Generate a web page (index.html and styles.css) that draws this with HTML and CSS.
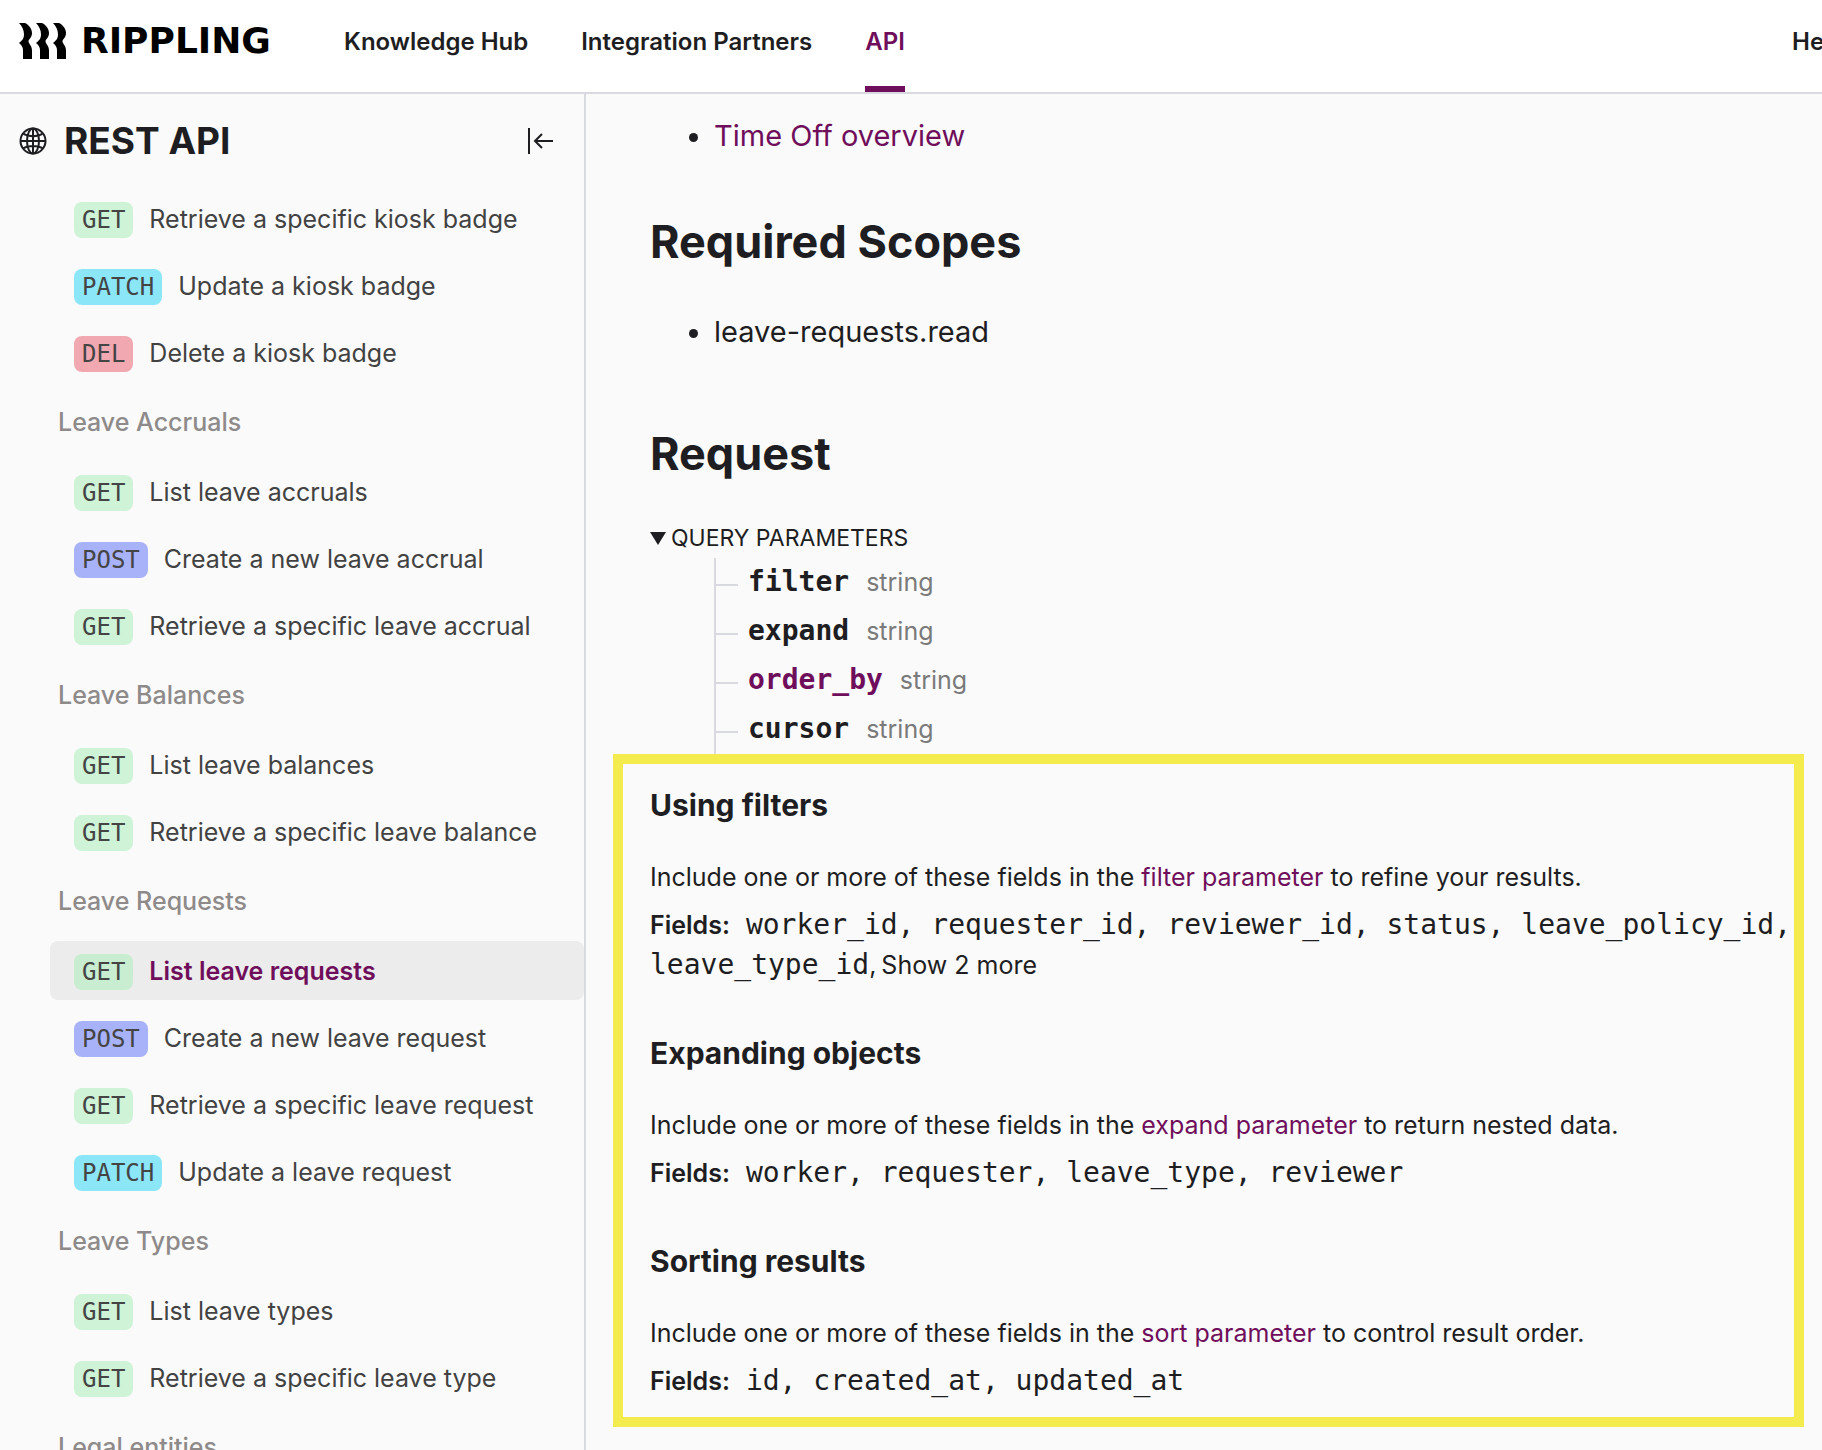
FILE: index.html
```html
<!DOCTYPE html>
<html lang="en">
<head>
    <meta charset="UTF-8">
    <meta name="viewport" content="width=device-width, initial-scale=1.0">
    <title>List leave requests - REST API</title>
    <link rel="stylesheet" href="styles.css">
</head>
<body>
    <header class="topbar">
        <a class="brand" href="#">
            <svg class="brand-mark" viewBox="0 0 47 36" aria-hidden="true">
                <defs>
                    <path id="ripple" d="M0 0H6C10 2 13 6 13 10C13 15 9.500 16 9.500 18.500C9.500 20.500 13 22.500 13 27.500V36H4V27C4 24 2.500 22 0 20C2.500 18 5 16 5 11.500C5 7 3 3 0 0Z"/>
                </defs>
                <use href="#ripple"/>
                <use href="#ripple" x="17"/>
                <use href="#ripple" x="34"/>
            </svg>
            <span class="brand-name">RIPPLING</span>
        </a>
        <nav class="topnav">
            <a href="#">Knowledge Hub</a>
            <a href="#">Integration Partners</a>
            <a href="#" class="current">API</a>
        </nav>
        <a class="help" href="#">He</a>
    </header>

    <div class="layout">
        <aside class="sidebar">
            <div class="sidebar-header">
                <svg class="globe" viewBox="0 0 28 28" aria-hidden="true">
                    <circle cx="14" cy="14" r="12.5"/>
                    <ellipse cx="14" cy="14" rx="6" ry="12.5"/>
                    <path d="M14 1.500V26.500M1.500 14H26.500M4 6.500C9 10 19 10 24 6.500M4 21.500C9 18 19 18 24 21.500"/>
                </svg>
                <h1>REST API</h1>
                <button class="collapse" type="button" aria-label="Collapse sidebar">
                    <svg viewBox="0 0 26 28" aria-hidden="true">
                        <path d="M1 1V27M25 14H7M14 7L7 14L14 21"/>
                    </svg>
                </button>
            </div>

            <ul class="endpoints">
                <li><a href="#"><span class="method get">GET</span>Retrieve a specific kiosk badge</a></li>
                <li><a href="#"><span class="method patch">PATCH</span>Update a kiosk badge</a></li>
                <li><a href="#"><span class="method del">DEL</span>Delete a kiosk badge</a></li>
                <li class="group">Leave Accruals</li>
                <li><a href="#"><span class="method get">GET</span>List leave accruals</a></li>
                <li><a href="#"><span class="method post">POST</span>Create a new leave accrual</a></li>
                <li><a href="#"><span class="method get">GET</span>Retrieve a specific leave accrual</a></li>
                <li class="group">Leave Balances</li>
                <li><a href="#"><span class="method get">GET</span>List leave balances</a></li>
                <li><a href="#"><span class="method get">GET</span>Retrieve a specific leave balance</a></li>
                <li class="group">Leave Requests</li>
                <li><a href="#" class="active"><span class="method get">GET</span>List leave requests</a></li>
                <li><a href="#"><span class="method post">POST</span>Create a new leave request</a></li>
                <li><a href="#"><span class="method get">GET</span>Retrieve a specific leave request</a></li>
                <li><a href="#"><span class="method patch">PATCH</span>Update a leave request</a></li>
                <li class="group">Leave Types</li>
                <li><a href="#"><span class="method get">GET</span>List leave types</a></li>
                <li><a href="#"><span class="method get">GET</span>Retrieve a specific leave type</a></li>
                <li class="group">Legal entities</li>
            </ul>
        </aside>

        <main>
            <div class="content">
                <ul class="bullets">
                    <li><a href="#">Time Off overview</a></li>
                </ul>

                <h2 class="scopes">Required Scopes</h2>
                <ul class="bullets">
                    <li>leave-requests.read</li>
                </ul>

                <h2 class="request">Request</h2>
                <details open>
                    <summary>QUERY PARAMETERS</summary>
                    <ul class="params">
                        <li><code>filter</code><span>string</span></li>
                        <li><code>expand</code><span>string</span></li>
                        <li><code class="selected">order_by</code><span>string</span></li>
                        <li><code>cursor</code><span>string</span></li>
                    </ul>
                </details>
            </div>

            <div class="highlight">
                <section>
                    <h3>Using filters</h3>
                    <p>Include one or more of these fields in the <a href="#">filter parameter</a> to refine your results.</p>
                    <p class="fields"><strong>Fields:</strong><code>worker_id, requester_id, reviewer_id, status, leave_policy_id, leave_type_id</code>,<button type="button">Show 2 more</button></p>
                </section>
                <section>
                    <h3>Expanding objects</h3>
                    <p>Include one or more of these fields in the <a href="#">expand parameter</a> to return nested data.</p>
                    <p class="fields"><strong>Fields:</strong><code>worker, requester, leave_type, reviewer</code></p>
                </section>
                <section>
                    <h3>Sorting results</h3>
                    <p>Include one or more of these fields in the <a href="#">sort parameter</a> to control result order.</p>
                    <p class="fields"><strong>Fields:</strong><code>id, created_at, updated_at</code></p>
                </section>
            </div>
        </main>
    </div>
</body>
</html>
```

FILE: styles.css
```css
* { box-sizing: border-box; }
body {
    margin: 0;
    height: 100vh;
    display: flex;
    flex-direction: column;
    overflow: hidden;
    font-family: Inter, "Liberation Sans", sans-serif;
    font-size: 25px;
    line-height: 40px;
    color: #1e1e22;
    background-color: #fafafa;
}
h1, h2, h3, p, ul { margin: 0; padding: 0; }
ul { list-style: none; }
a { color: #6f0e5a; text-decoration: none; }
button { border: 0; padding: 0; background: none; font: inherit; color: inherit; cursor: pointer; }
code { font-family: "DejaVu Sans Mono", monospace; font-size: 28px; line-height: 28px; }

/* Top bar */
.topbar {
    flex: none;
    display: flex;
    padding-left: 19px;
    background-color: #fff;
    border-bottom: 2px solid #d9d9e0;
    font-size: 24px;
    font-weight: 600;
    line-height: 84px;
    white-space: nowrap;
}
.brand { display: flex; align-items: center; gap: 15px; width: 325px; padding-bottom: 10px; color: #000; }
.brand-mark { width: 47px; height: 36px; }
.brand-name { font-family: "DejaVu Sans", sans-serif; font-size: 36px; font-weight: bold; line-height: 36px; }
.topnav { display: flex; gap: 53px; }
.topnav a, .help { padding-bottom: 2px; border-bottom: 6px solid transparent; color: #1e1e22; }
.topnav .current { color: #6f0e5a; border-color: #6f0e5a; }
.help { width: 30px; margin-left: auto; }

.layout { flex: 1; min-height: 0; display: flex; }

/* Sidebar */
.sidebar { flex: none; width: 586px; overflow: hidden; border-right: 2px solid #d9d9e0; }
.sidebar-header { display: flex; align-items: center; gap: 17px; height: 95px; padding: 0 30px 2px 19px; }
.sidebar-header h1 { font-size: 37px; }
.sidebar-header svg { display: block; fill: none; stroke: #1e1e22; stroke-width: 2; }
.globe { width: 28px; height: 28px; }
.collapse { margin-left: auto; }
.collapse svg { width: 26px; height: 28px; }
.endpoints { display: flex; flex-direction: column; gap: 8px; padding-left: 50px; }
.endpoints a {
    display: flex;
    align-items: baseline;
    gap: 16px;
    height: 59px;
    padding: 13px 0 0 24px;
    border-radius: 8px;
    line-height: 32px;
    color: #424242;
    white-space: nowrap;
}
.endpoints .active { background-color: #ececec; color: #6f0e5a; font-weight: 600; }
.group { padding-left: 8px; line-height: 64px; font-weight: 500; color: #8e8a8a; }
.method {
    padding: 0 8px;
    border-radius: 8px;
    font-family: "DejaVu Sans Mono", monospace;
    font-size: 24px;
    font-weight: normal;
    line-height: 36px;
    color: #444;
}
.get { background-color: #cef3d7; }
.post { background-color: #a8b2f8; }
.patch { background-color: #8be6f8; }
.del { background-color: #f1a8b1; }
.active .get { background-color: #c8edd1; }

/* Main column */
main { flex: 1; min-width: 0; overflow: hidden; }
.content { padding: 22px 64px 0; }
.bullets { padding-left: 64px; list-style: disc; font-size: 29px; }
h2 { font-size: 45px; line-height: 54px; }
.scopes { margin: 59px 0 43px; }
.request { margin: 75px 0 38px; }
summary { display: flex; align-items: center; gap: 5px; font-size: 23px; line-height: 39px; cursor: pointer; }
summary::before { content: ""; border: 8px solid transparent; border-top: 13px solid #1e1e22; border-bottom: 0; }
.params { margin-left: 64px; border-left: 2px solid #d9d9e0; }
.params li { display: flex; align-items: baseline; height: 49px; line-height: 49px; }
.params li::before { content: ""; align-self: center; width: 22px; height: 2px; margin: 4px 10px 0 0; background-color: #d9d9e0; }
.params code { font-weight: bold; }
.params span { margin-left: 17px; color: #7a7a7a; }
.selected { color: #6f0e5a; }

.highlight {
    display: flex;
    flex-direction: column;
    gap: 48px;
    margin: 0 18px 0 27px;
    padding: 21px 0 16px 27px;
    border: 10px solid #f4ec4f;
}
h3 { margin-bottom: 32px; font-size: 30px; }
.fields { margin-top: 8px; }
.fields strong { margin-right: 16px; font-weight: 600; }
.fields button { margin-left: 5px; line-height: 28px; }
```
